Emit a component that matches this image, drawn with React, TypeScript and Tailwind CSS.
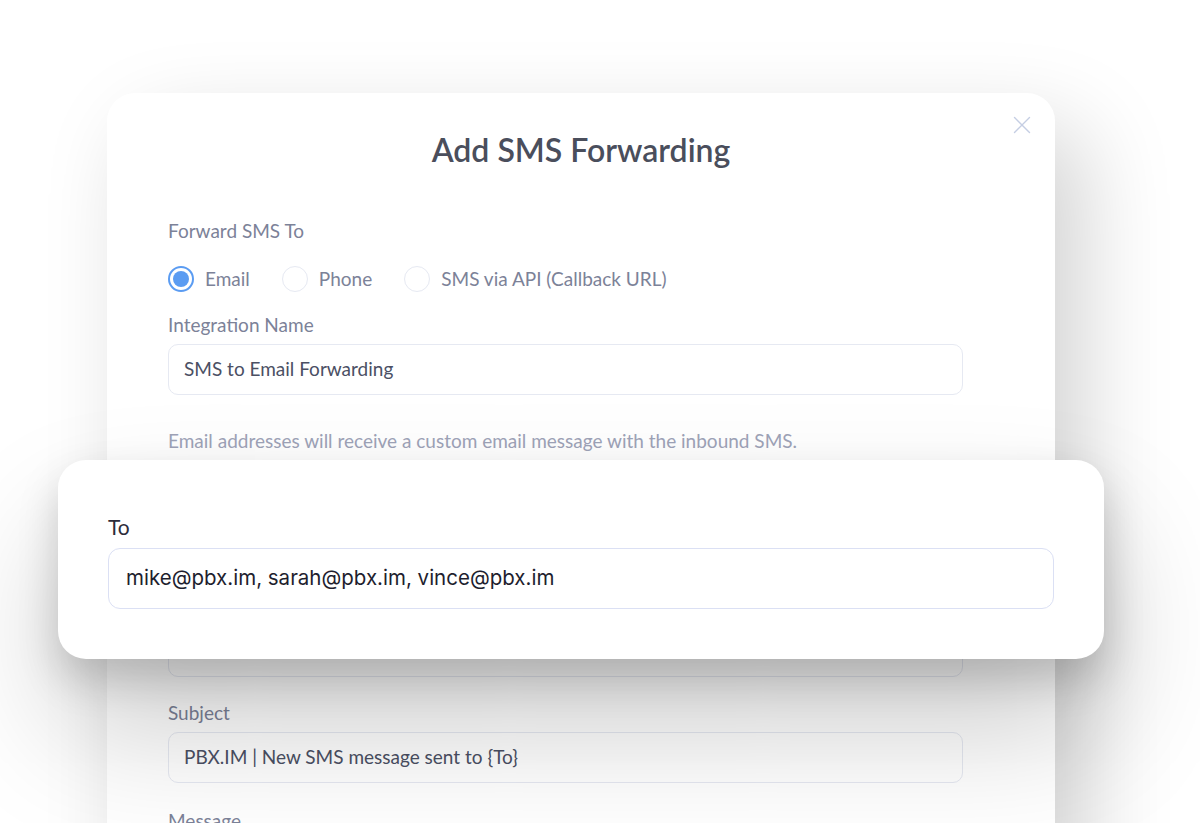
import { X } from "lucide-react";

const base = "font-['Lato','Inter',sans-serif]";

function Radio({ label, checked = false }: { label: string; checked?: boolean }) {
  return (
    <label className="flex items-center gap-[11px]">
      <span
        className={`grid h-[26px] w-[26px] place-items-center rounded-full ${
          checked ? "border-2 border-[#5b9cf2]" : "border-[1.5px] border-[#e6e9f2]"
        }`}
      >
        {checked && <span className="h-[16px] w-[16px] rounded-full bg-[#5b9cf2]" />}
      </span>
      <span className="text-[19px] text-[#7c8298]">{label}</span>
    </label>
  );
}

function Field({ label, value, className = "" }: { label: string; value: string; className?: string }) {
  return (
    <div className={className}>
      <p className="text-[19px] leading-6 text-[#7c8298]">{label}</p>
      <div className="mt-[7px] flex h-[51px] items-center rounded-[10px] border border-[#e6e9f2] px-[15px] text-[19px] text-[#4b5064]">
        {value}
      </div>
    </div>
  );
}

export default function App() {
  return (
    <div className={`relative h-[823px] w-[1200px] overflow-hidden bg-white ${base}`}>
      {/* main modal */}
      <div className="relative ml-[107px] mt-[93px] h-[800px] w-[948px] rounded-[28px] bg-white pl-[61px] pr-[92px] pt-[39px] shadow-[28px_36px_90px_rgba(0,0,0,0.18)]">
        <button type="button" className="absolute right-[18px] top-[17px] text-[#c5cee3]">
          <X className="h-[30px] w-[30px]" strokeWidth={1.1} />
        </button>
        <h1 className="-mr-[31px] text-center text-[32px] font-semibold leading-9 text-[#4a4e5c]">
          Add SMS Forwarding
        </h1>

        <p className="mt-[51px] text-[19px] leading-6 text-[#7c8298]">Forward SMS To</p>
        <div className="mt-[22px] flex gap-[32px]">
          <Radio label="Email" checked />
          <Radio label="Phone" />
          <Radio label="SMS via API (Callback URL)" />
        </div>

        <Field className="mt-[19px]" label="Integration Name" value="SMS to Email Forwarding" />

        <p className="mt-[34px] text-[19px] leading-6 text-[#9ea3b8]">
          Email addresses will receive a custom email message with the inbound SMS.
        </p>

        <Field className="mt-[142px]" label="To" value="" />
        <Field className="mt-[24px]" label="Subject" value="PBX.IM | New SMS message sent to {To}" />
        <p className="mt-[26px] text-[19px] leading-6 text-[#7c8298]">Message</p>
      </div>

      {/* popped-out To field */}
      <div className="absolute left-[58px] top-[460px] h-[199px] w-[1046px] rounded-[28px] bg-white px-[50px] pt-[55px] shadow-[0_20px_40px_rgba(0,0,0,0.17),0_70px_130px_rgba(0,0,0,0.2)]">
        <p className="text-[21px] leading-6 text-[#2c2c3a]">To</p>
        <div className="mt-[9px] flex h-[61px] items-center rounded-[12px] border-[1.5px] border-[#dbe0f4] px-[17px] font-['Inter',sans-serif] text-[20.5px] text-[#1e1e2e]">
          mike@pbx.im, sarah@pbx.im, vince@pbx.im
        </div>
      </div>
    </div>
  );
}
